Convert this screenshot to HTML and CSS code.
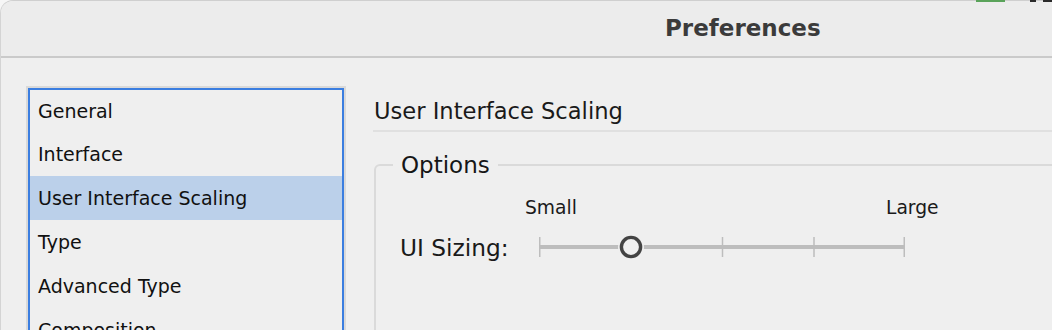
FILE: index.html
```html
<!DOCTYPE html>
<html>
<head>
<meta charset="utf-8">
<title>Preferences</title>
<link rel="stylesheet" href="styles.css">
</head>
<body>
<div class="window">
  <span class="peek peek-green"></span>
  <span class="peek peek-dark1"></span>
  <span class="peek peek-dark2"></span>
  <header class="titlebar">Preferences</header>
  <main class="content">
    <nav class="list">
      <div class="row">General</div>
      <div class="row">Interface</div>
      <div class="row selected">User Interface Scaling</div>
      <div class="row">Type</div>
      <div class="row">Advanced Type</div>
      <div class="row">Composition</div>
    </nav>
    <section class="panel">
      <h1 class="heading">User Interface Scaling</h1>
      <fieldset class="group">
        <legend class="legend">Options</legend>
        <div class="ticklabels">
          <span class="tl-small">Small</span>
          <span class="tl-large">Large</span>
        </div>
        <div class="sizing">
          <span class="sizing-label">UI Sizing:</span>
          <svg class="slider" width="372" height="28" viewBox="0 0 372 28">
            <rect x="2" y="12" width="366" height="4" fill="#bdbdbd"/>
            <g stroke="#bdbdbd" stroke-width="1.5">
              <line x1="2.75" y1="4" x2="2.75" y2="24"/>
              <line x1="185.5" y1="4" x2="185.5" y2="24"/>
              <line x1="277" y1="4" x2="277" y2="24"/>
              <line x1="367.25" y1="4" x2="367.25" y2="24"/>
            </g>
            <circle cx="94" cy="14" r="13" fill="#efefef"/>
            <circle cx="94" cy="14" r="9.6" fill="#efefef" stroke="#434343" stroke-width="3.4"/>
          </svg>
        </div>
      </fieldset>
    </section>
  </main>
</div>
</body>
</html>
```

FILE: styles.css
```css
html, body {
  margin: 0;
  padding: 0;
  background: #f6f6f6;
}

.window {
  position: relative;
  width: 1052px;
  height: 330px;
  background: #efefef;
  border-top: 1px solid #cfcfcf;
  border-left: 1px solid #d4d4d4;
  border-top-left-radius: 13px;
  box-sizing: border-box;
  font-family: "DejaVu Sans", Verdana, sans-serif;
}

.peek {
  position: absolute;
  top: -1px;
  height: 2px;
}
.peek-green { left: 975px; width: 29px; background: #5aa35a; }
.peek-dark1 { left: 1029px; width: 6px; background: #2a2a2a; }
.peek-dark2 { left: 1042px; width: 10px; background: #2a2a2a; }

.titlebar {
  height: 55px;
  line-height: 55px;
  background: #ececec;
  border-bottom: 2px solid #cacaca;
  border-top-left-radius: 12px;
  padding-left: 664px;
  font-weight: bold;
  font-size: 23px;
  color: #3b3b3b;
}

.content {
  display: flex;
  align-items: flex-start;
  height: 272px;
  overflow: hidden;
}

.list {
  margin-left: 27px;
  margin-top: 30px;
  width: 312px;
  height: 300px;
  border: 2px solid #3b7ee0;
  box-shadow: 0 0 0 2px #d9d9d9;
  font-size: 19px;
  color: #111;
  flex: none;
}

.row {
  height: 44px;
  line-height: 44px;
  padding-left: 8px;
  white-space: nowrap;
}
.row:first-child {
  height: 42px;
  line-height: 42px;
}
.row.selected {
  background: #bbd0ea;
}

.panel {
  margin-left: 29px;
  flex: none;
  width: 800px;
}

.heading {
  margin: 39px 0 0 0;
  padding: 0 0 5px 1px;
  height: 28px;
  line-height: 28px;
  font-size: 22.6px;
  font-weight: normal;
  color: #1a1a1a;
  border-bottom: 2px solid #e0e0e0;
}

.group {
  margin: 19px 0 0 1px;
  padding: 17px 0 0 17px;
  height: 300px;
  border: 2px solid #dadada;
  border-radius: 6px;
  min-inline-size: 0;
}

.legend {
  padding: 0 8px;
  font-size: 23px;
  line-height: 28px;
  color: #161616;
}

.ticklabels {
  display: flex;
  padding-left: 132px;
  height: 24px;
  line-height: 24px;
  font-size: 18.7px;
  color: #1a1a1a;
}
.tl-small {
  width: 361px;
}

.sizing {
  display: flex;
  align-items: center;
  margin-top: 13px;
  height: 28px;
}
.sizing-label {
  width: 137px;
  padding-left: 7px;
  font-size: 23.3px;
  color: #1a1a1a;
  flex: none;
}
.slider {
  display: block;
  flex: none;
}
```
